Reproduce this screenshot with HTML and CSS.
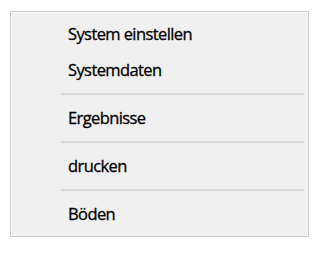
FILE: index.html
```html
<!DOCTYPE html>
<html>
<head>
<meta charset="utf-8">
<link rel="stylesheet" href="styles.css">
</head>
<body>
<div class="menu">
  <div class="item">System einstellen</div>
  <div class="item">Systemdaten</div>
  <div class="sep"></div>
  <div class="item">Ergebnisse</div>
  <div class="sep"></div>
  <div class="item">drucken</div>
  <div class="sep"></div>
  <div class="item">Böden</div>
</div>
</body>
</html>
```
FILE: styles.css
```css
html, body {
  margin: 0;
  padding: 0;
  background: #ffffff;
}
body {
  padding: 11px 0 0 10px;
}
.menu {
  width: 297px;
  border: 1px solid #cccccc;
  background: #f0f0f0;
  padding: 4px 0;
  font-family: "Open Sans", "Noto Sans", sans-serif;
  font-size: 16.5px;
  letter-spacing: -0.6px;
  color: #000000;
  -webkit-text-stroke: 0.3px #000000;
  box-shadow: inset 1px 1px 0 #f9f9f9;
}
.item {
  height: 36px;
  line-height: 36px;
  padding-left: 57px;
  white-space: nowrap;
}
.sep {
  height: 12px;
  margin: 0 4px 0 50px;
  display: flex;
  flex-direction: column;
  justify-content: center;
}
.sep::before {
  content: "";
  display: block;
  height: 2px;
  background: #d7d7d7;
}
```
